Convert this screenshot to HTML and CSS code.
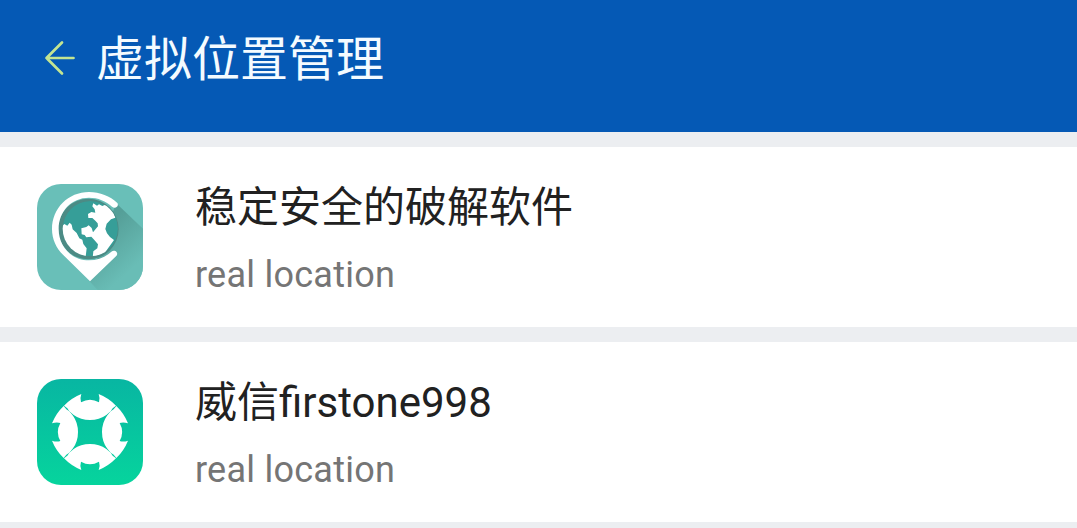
FILE: index.html
```
<!DOCTYPE html>
<html lang="zh-CN">
<head>
    <meta charset="UTF-8">
    <meta name="viewport" content="width=device-width, initial-scale=1.0">
    <title>虚拟位置管理</title>
    <link rel="stylesheet" href="styles.css">
</head>
<body>
    <header>
        <svg class="back" viewBox="0 0 32 36" fill="none" stroke="#c3e592" stroke-width="2.7" stroke-linecap="round" stroke-linejoin="round">
            <path d="M18 2.5L2.5 18L18 33.5M2.5 18H29.5" />
        </svg>
        <h1>虚拟位置管理</h1>
    </header>

    <ul class="app-list">
        <li class="app">
            <svg class="app-icon" viewBox="21 18 318 318">
                <defs>
                    <linearGradient id="shadow" x1="220" y1="150" x2="320" y2="260" gradientUnits="userSpaceOnUse">
                        <stop offset="0" stop-color="#559f98" />
                        <stop offset="1" stop-color="#69bdb6" />
                    </linearGradient>
                    <clipPath id="globe">
                        <circle cx="181" cy="152" r="83" />
                    </clipPath>
                </defs>
                <rect x="21" y="18" width="318" height="318" fill="#69bfb8" />
                <path d="M258 75L339 152V336H203L178 309Z" fill="url(#shadow)" />
                <circle cx="175" cy="153" r="91" fill="#4c8b85" />
                <!-- pin -->
                <path d="M262 75C240 54 210 42 177 42C115 42 66 91 66 153C66 184 79 211 99 230L180 310L258 235C264 229 262 222 256 219C252 217 248 218 244 221C226 238 203 247 177 247C124 247 86 205 86 153C86 100 124 59 177 59C204 59 228 69 246 86C256 94 268 84 262 75Z" fill="#fff" />
                <!-- globe -->
                <g clip-path="url(#globe)">
                    <circle cx="181" cy="152" r="83" fill="#369e98" />
                    <path d="M96 145L103 138L112 143L119 134L125 140L128 154L140 165L148 181L157 185L160 198L170 211L167 236H120L94 190Z" fill="#fff" />
                    <path d="M190 76L201 83L207 79L217 84L229 79L246 91L256 119L243 124L230 137L226 153L231 166L240 177L252 186L224 225L188 240L190 220L202 211L204 199L193 186L184 176L169 178L164 171L155 169L154 151L169 147L176 142L185 150L189 163L197 153L204 145L203 136L196 128L187 120L175 120L174 108L184 102L196 104L194 94L187 85Z" fill="#fff" />
                </g>
            </svg>
            <div class="info">
                <div class="name">稳定安全的破解软件</div>
                <div class="location">real location</div>
            </div>
        </li>
        <li class="app">
            <svg class="app-icon" viewBox="21 21 318 318">
                <defs>
                    <linearGradient id="green" x1="0" y1="0" x2="0" y2="1">
                        <stop offset="0" stop-color="#08b6a2" />
                        <stop offset="1" stop-color="#06d49d" />
                    </linearGradient>
                    <path id="fish" d="M102 101Q124 78 154 66Q149 80 153 91Q180 76 207 91Q211 80 206 66Q236 78 258 101L248 109L242 118L229 129Q208 144 180 144Q152 144 131 129L118 118L112 109Z" />
                </defs>
                <rect x="21" y="21" width="318" height="318" fill="url(#green)" />
                <g fill="#fff">
                    <use href="#fish" />
                    <use href="#fish" transform="rotate(90 180 180)" />
                    <use href="#fish" transform="rotate(180 180 180)" />
                    <use href="#fish" transform="rotate(270 180 180)" />
                </g>
            </svg>
            <div class="info">
                <div class="name">威信firstone998</div>
                <div class="location">real location</div>
            </div>
        </li>
    </ul>
</body>
</html>
```
FILE: styles.css
```
* {
    box-sizing: border-box;
}

body {
    margin: 0;
    background-color: #eceef1;
    font-family: Roboto, "Noto Sans CJK SC", sans-serif;
    overflow: hidden;
}

header {
    display: flex;
    align-items: center;
    height: 132px;
    padding: 0 0 16px 44px;
    background-color: #0559b5;
}

.back {
    width: 32px;
    height: 36px;
    margin-right: 20px;
}

header h1 {
    margin: 3px 0 0;
    font-size: 48px;
    font-weight: 400;
    line-height: 60px;
    color: #f4fbff;
}

.app-list {
    display: flex;
    flex-direction: column;
    gap: 15px;
    margin: 15px 0 0;
    padding: 0;
    list-style: none;
}

.app {
    display: flex;
    height: 180px;
    padding: 37px 37px 0;
    background-color: #fff;
}

.app-icon {
    width: 106px;
    height: 106px;
    margin-right: 52px;
    border-radius: 24px;
}

.name {
    margin-top: -1px;
    font-size: 42px;
    line-height: 50px;
    color: #212121;
}

.location {
    margin-top: 21px;
    font-size: 36px;
    line-height: 42px;
    letter-spacing: 0.25px;
    color: #757575;
}
```
